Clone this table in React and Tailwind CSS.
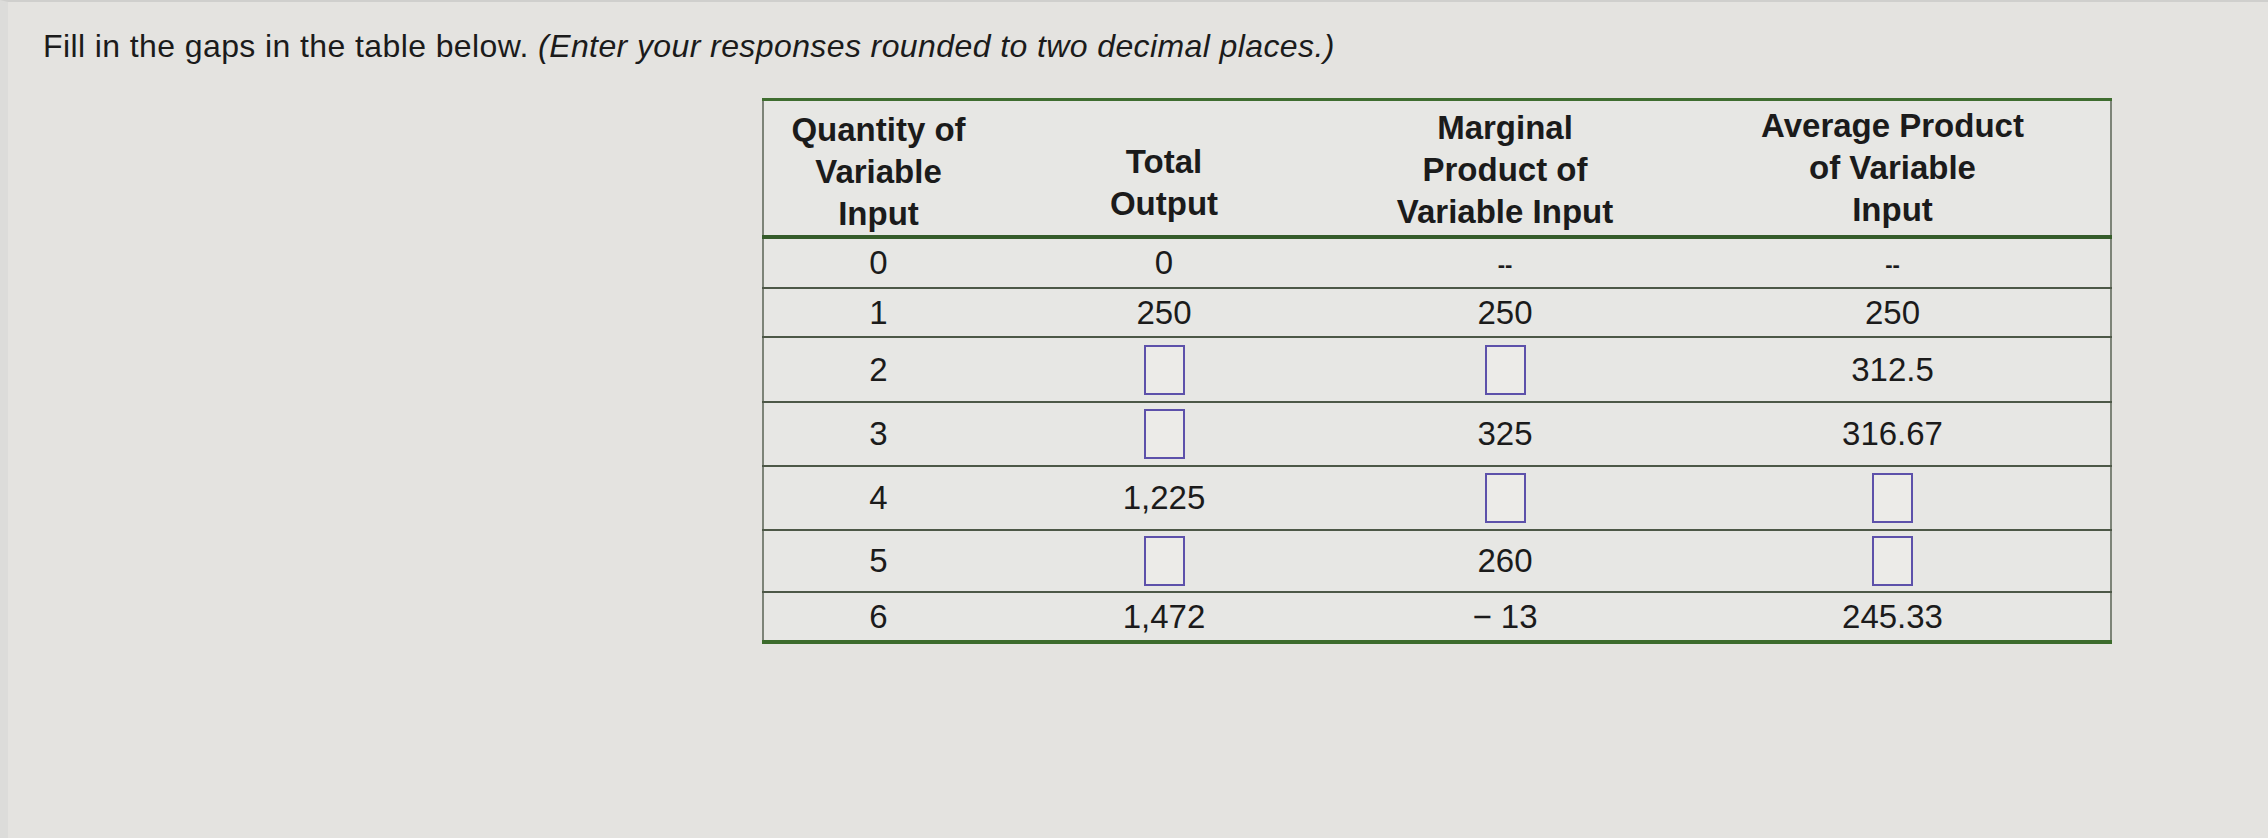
import React from "react";

function Box() {
  return (
    <span className="inline-block align-middle w-[41px] h-[50px] border-2 border-[#5d51aa] bg-[#ecebe8]" />
  );
}

const rows = [
  { h: "h-[51px]", c: ["0", "0", "--", "--"] },
  { h: "h-[49px]", c: ["1", "250", "250", "250"] },
  { h: "h-[65px]", c: ["2", "box", "box", "312.5"] },
  { h: "h-[64px]", c: ["3", "box", "325", "316.67"] },
  { h: "h-[64px]", c: ["4", "1,225", "box", "box"] },
  { h: "h-[62px]", c: ["5", "box", "260", "box"] },
  { h: "h-[50px]", c: ["6", "1,472", "\u2212 13", "245.33"] },
];

export default function App() {
  return (
    <div className="w-[2268px] h-[838px] overflow-hidden bg-[#e4e3e0] font-['Liberation_Sans',Arial,sans-serif] text-[#1b1b1b] border-t-2 border-t-[#cfcfcd] border-l-[8px] border-l-[#dcdcda]">
      <div className="pl-[35px] pt-[27px] text-[32px] leading-[34px] tracking-[0.4px] whitespace-nowrap">
        Fill in the gaps in the table below. <i>(Enter your responses rounded to two decimal places.)</i>
      </div>
      <div className="pl-[754px] pt-[35px]">
        <table className="table-fixed border-collapse w-[1348px] bg-[#e7e7e4] border-l-2 border-r-2 border-[#7d8478]">
          <colgroup>
            <col className="w-[230px]" />
            <col className="w-[342px]" />
            <col className="w-[340px]" />
            <col className="w-[436px]" />
          </colgroup>
          <thead>
            <tr className="h-[136px] border-t-[3px] border-t-[#3f6d30] border-b-[4px] border-b-[#355c2a] text-[33px] leading-[42px] font-bold">
              <th className="align-middle text-center font-bold pt-[8px]">
                Quantity of<br />Variable<br />Input
              </th>
              <th className="align-middle text-center font-bold pt-[30px]">
                Total<br />Output
              </th>
              <th className="align-middle text-center font-bold pt-[4px]">
                Marginal<br />Product of<br />Variable Input
              </th>
              <th className="align-middle text-center font-bold">
                Average Product<br />of Variable<br />Input
              </th>
            </tr>
          </thead>
          <tbody className="text-[33px] leading-[34px]">
            {rows.map((r, i) => (
              <tr
                key={i}
                className={
                  r.h +
                  " " +
                  (i === rows.length - 1
                    ? "border-b-[4px] border-b-[#3c6b2c]"
                    : "border-b-2 border-b-[#4d5847]")
                }
              >
                {r.c.map((v, j) => (
                  <td key={j} className="text-center align-middle p-0">
                    {v === "box" ? <Box /> : v === "--" ? <span className="text-[22px] font-bold">--</span> : v}
                  </td>
                ))}
              </tr>
            ))}
          </tbody>
        </table>
      </div>
    </div>
  );
}
